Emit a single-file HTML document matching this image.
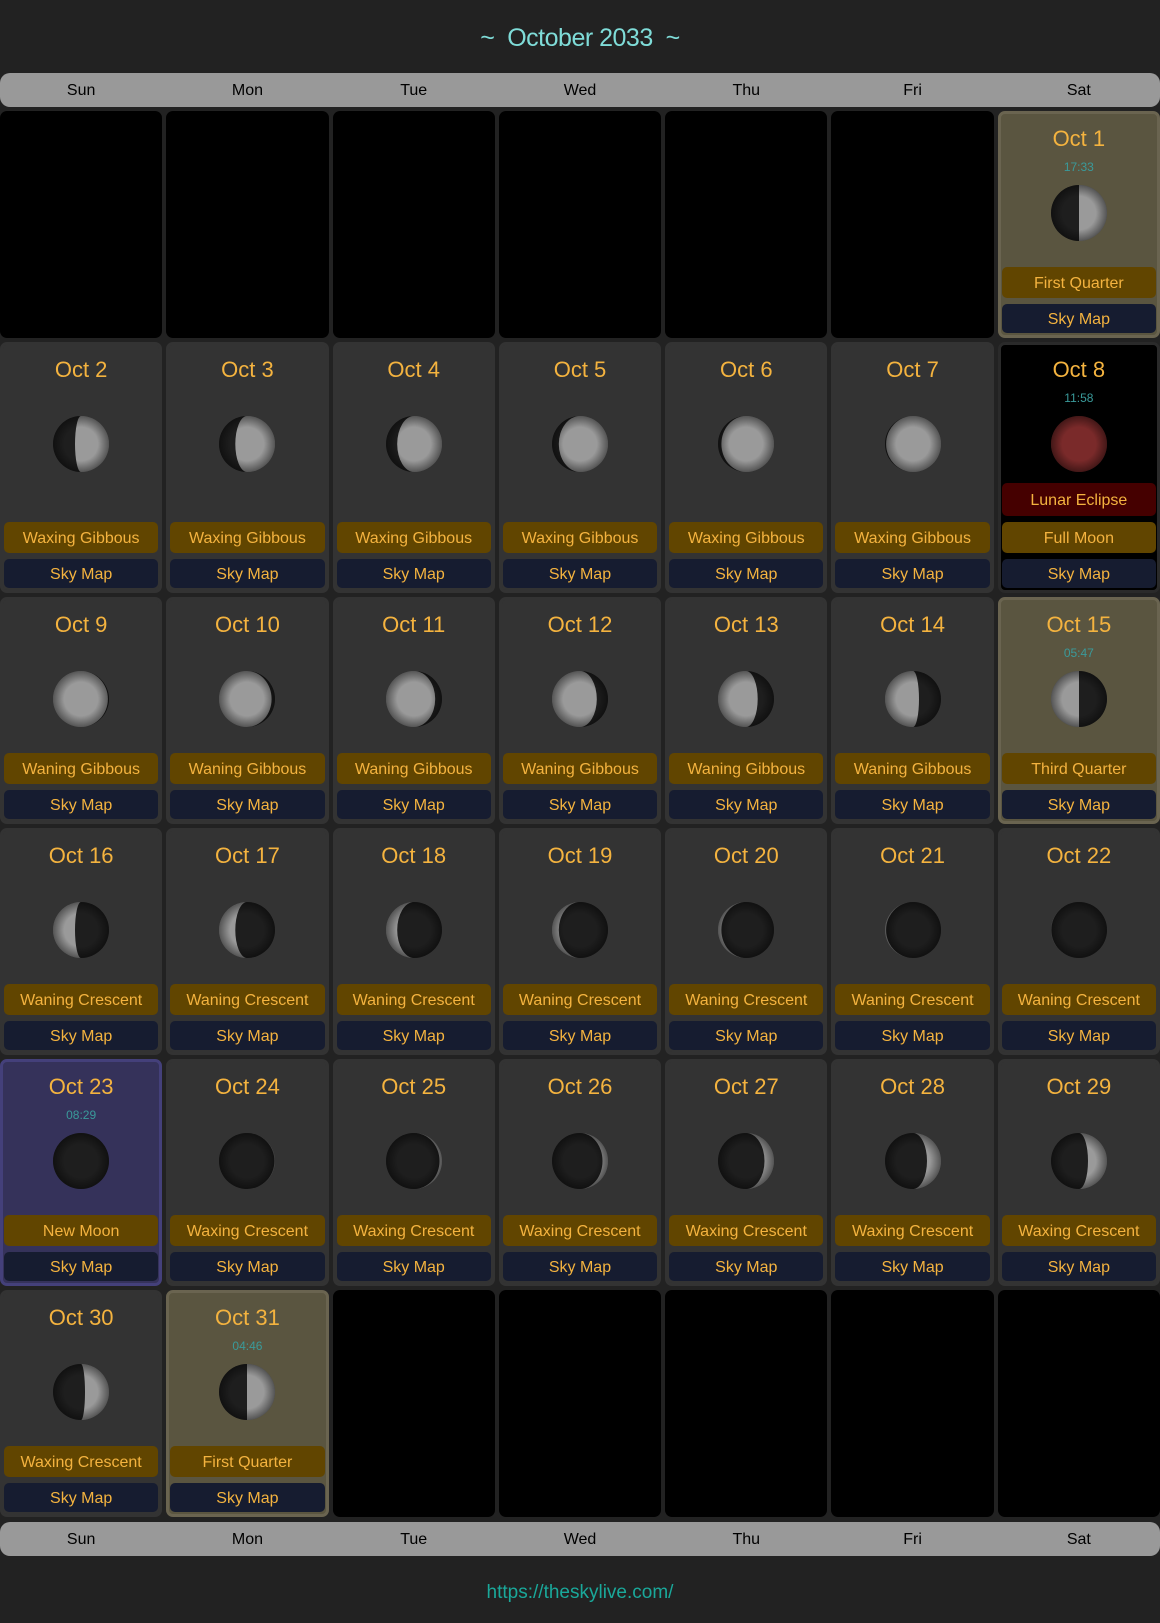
<!DOCTYPE html>
<html><head><meta charset="utf-8"><style>
*{box-sizing:border-box;margin:0;padding:0}
body{width:1160px;height:1623px;background:#222;font-family:"Liberation Sans",sans-serif;position:relative;overflow:hidden}
.title{position:absolute;top:22px;left:0;width:1160px;text-align:center;color:#7fdcd8;font-size:25px;line-height:32px;letter-spacing:-0.5px}
.bar{position:absolute;left:0;width:1160px;height:34px;background:#999;border-radius:10px;display:grid;grid-template-columns:repeat(7,1fr);column-gap:4px}
.bar div{text-align:center;font-size:16px;line-height:36px;color:#000}
.grid{position:absolute;left:0;top:111px;width:1160px;display:grid;grid-template-columns:repeat(7,1fr);grid-template-rows:227px 251px 227px 227px 227px 227px;gap:4px}
.c{background:#333;border-radius:7px;display:flex;flex-direction:column;align-items:center;border:3px solid #333}
.e{background:#000;border-radius:7px}
.q{background:#5a5540;border-color:#6a6450}
.n{background:#35325a;border-color:#44407a}
.f{background:#000;border-color:#2a2a2a}
.d{color:#f4b33f;font-size:22px;line-height:30px;margin-top:10px}
.t{color:#3a9a9a;font-size:12px;line-height:16px;height:16px;margin-top:5px}
.m{margin-top:10px;width:56px;height:56px}
.sp{flex:1}
.l,.s{width:calc(100% - 2px);color:#f4b33f;font-size:16px;text-align:center;border-radius:5px}
.l{background:#614500;height:31px;line-height:33px;margin-bottom:6px}
.x{background:#450000;height:33px;line-height:35px}
.s{background:#161c30;height:29px;line-height:31px;margin-bottom:2px}
.foot{position:absolute;top:1580px;width:1160px;text-align:center;color:#1aa89a;font-size:19px;line-height:26px}
</style></head><body>
<svg width="0" height="0" style="position:absolute"><defs><radialGradient id="g" cx="50%" cy="50%" r="50%"><stop offset="0.6" stop-color="#000" stop-opacity="0"/><stop offset="1" stop-color="#000" stop-opacity="0.45"/></radialGradient></defs></svg>
<div class="title">~&nbsp;&nbsp;October 2033&nbsp;&nbsp;~</div>
<div class="bar" style="top:73px"><div>Sun</div><div>Mon</div><div>Tue</div><div>Wed</div><div>Thu</div><div>Fri</div><div>Sat</div></div>
<div class="grid">
<div class="e"></div><div class="e"></div><div class="e"></div><div class="e"></div><div class="e"></div><div class="e"></div>
<div class="c q"><div class="d">Oct 1</div><div class="t">17:33</div><svg class="m" viewBox="0 0 56 56"><circle cx="28" cy="28" r="28" fill="#1e1e1e"/><path d="M28 0A28 28 0 0 1 28 56Z" fill="#9a9a9a"/><circle cx="28" cy="28" r="28" fill="url(#g)"/></svg><div class="sp"></div><div class="l">First Quarter</div><div class="s">Sky Map</div></div>

<div class="c"><div class="d">Oct 2</div><div class="t"></div><svg class="m" viewBox="0 0 56 56"><circle cx="28" cy="28" r="28" fill="#1e1e1e"/><path d="M28 0A28 28 0 0 1 28 56A6 28 0 0 1 28 0Z" fill="#9a9a9a"/><circle cx="28" cy="28" r="28" fill="url(#g)"/></svg><div class="sp"></div><div class="l">Waxing Gibbous</div><div class="s">Sky Map</div></div>
<div class="c"><div class="d">Oct 3</div><div class="t"></div><svg class="m" viewBox="0 0 56 56"><circle cx="28" cy="28" r="28" fill="#1e1e1e"/><path d="M28 0A28 28 0 0 1 28 56A11.7 28 0 0 1 28 0Z" fill="#9a9a9a"/><circle cx="28" cy="28" r="28" fill="url(#g)"/></svg><div class="sp"></div><div class="l">Waxing Gibbous</div><div class="s">Sky Map</div></div>
<div class="c"><div class="d">Oct 4</div><div class="t"></div><svg class="m" viewBox="0 0 56 56"><circle cx="28" cy="28" r="28" fill="#1e1e1e"/><path d="M28 0A28 28 0 0 1 28 56A16.8 28 0 0 1 28 0Z" fill="#9a9a9a"/><circle cx="28" cy="28" r="28" fill="url(#g)"/></svg><div class="sp"></div><div class="l">Waxing Gibbous</div><div class="s">Sky Map</div></div>
<div class="c"><div class="d">Oct 5</div><div class="t"></div><svg class="m" viewBox="0 0 56 56"><circle cx="28" cy="28" r="28" fill="#1e1e1e"/><path d="M28 0A28 28 0 0 1 28 56A21.2 28 0 0 1 28 0Z" fill="#9a9a9a"/><circle cx="28" cy="28" r="28" fill="url(#g)"/></svg><div class="sp"></div><div class="l">Waxing Gibbous</div><div class="s">Sky Map</div></div>
<div class="c"><div class="d">Oct 6</div><div class="t"></div><svg class="m" viewBox="0 0 56 56"><circle cx="28" cy="28" r="28" fill="#1e1e1e"/><path d="M28 0A28 28 0 0 1 28 56A24.6 28 0 0 1 28 0Z" fill="#9a9a9a"/><circle cx="28" cy="28" r="28" fill="url(#g)"/></svg><div class="sp"></div><div class="l">Waxing Gibbous</div><div class="s">Sky Map</div></div>
<div class="c"><div class="d">Oct 7</div><div class="t"></div><svg class="m" viewBox="0 0 56 56"><circle cx="28" cy="28" r="28" fill="#1e1e1e"/><path d="M28 0A28 28 0 0 1 28 56A26.9 28 0 0 1 28 0Z" fill="#9a9a9a"/><circle cx="28" cy="28" r="28" fill="url(#g)"/></svg><div class="sp"></div><div class="l">Waxing Gibbous</div><div class="s">Sky Map</div></div>
<div class="c f"><div class="d">Oct 8</div><div class="t">11:58</div><svg class="m" viewBox="0 0 56 56"><circle cx="28" cy="28" r="28" fill="#7a2a2a"/><circle cx="28" cy="28" r="28" fill="url(#g)"/></svg><div class="sp"></div><div class="l x">Lunar Eclipse</div><div class="l">Full Moon</div><div class="s">Sky Map</div></div>

<div class="c"><div class="d">Oct 9</div><div class="t"></div><svg class="m" viewBox="0 0 56 56"><circle cx="28" cy="28" r="28" fill="#1e1e1e"/><path d="M28 0A28 28 0 0 0 28 56A26.9 28 0 0 0 28 0Z" fill="#9a9a9a"/><circle cx="28" cy="28" r="28" fill="url(#g)"/></svg><div class="sp"></div><div class="l">Waning Gibbous</div><div class="s">Sky Map</div></div>
<div class="c"><div class="d">Oct 10</div><div class="t"></div><svg class="m" viewBox="0 0 56 56"><circle cx="28" cy="28" r="28" fill="#1e1e1e"/><path d="M28 0A28 28 0 0 0 28 56A24.6 28 0 0 0 28 0Z" fill="#9a9a9a"/><circle cx="28" cy="28" r="28" fill="url(#g)"/></svg><div class="sp"></div><div class="l">Waning Gibbous</div><div class="s">Sky Map</div></div>
<div class="c"><div class="d">Oct 11</div><div class="t"></div><svg class="m" viewBox="0 0 56 56"><circle cx="28" cy="28" r="28" fill="#1e1e1e"/><path d="M28 0A28 28 0 0 0 28 56A21.2 28 0 0 0 28 0Z" fill="#9a9a9a"/><circle cx="28" cy="28" r="28" fill="url(#g)"/></svg><div class="sp"></div><div class="l">Waning Gibbous</div><div class="s">Sky Map</div></div>
<div class="c"><div class="d">Oct 12</div><div class="t"></div><svg class="m" viewBox="0 0 56 56"><circle cx="28" cy="28" r="28" fill="#1e1e1e"/><path d="M28 0A28 28 0 0 0 28 56A16.8 28 0 0 0 28 0Z" fill="#9a9a9a"/><circle cx="28" cy="28" r="28" fill="url(#g)"/></svg><div class="sp"></div><div class="l">Waning Gibbous</div><div class="s">Sky Map</div></div>
<div class="c"><div class="d">Oct 13</div><div class="t"></div><svg class="m" viewBox="0 0 56 56"><circle cx="28" cy="28" r="28" fill="#1e1e1e"/><path d="M28 0A28 28 0 0 0 28 56A11.7 28 0 0 0 28 0Z" fill="#9a9a9a"/><circle cx="28" cy="28" r="28" fill="url(#g)"/></svg><div class="sp"></div><div class="l">Waning Gibbous</div><div class="s">Sky Map</div></div>
<div class="c"><div class="d">Oct 14</div><div class="t"></div><svg class="m" viewBox="0 0 56 56"><circle cx="28" cy="28" r="28" fill="#1e1e1e"/><path d="M28 0A28 28 0 0 0 28 56A6 28 0 0 0 28 0Z" fill="#9a9a9a"/><circle cx="28" cy="28" r="28" fill="url(#g)"/></svg><div class="sp"></div><div class="l">Waning Gibbous</div><div class="s">Sky Map</div></div>
<div class="c q"><div class="d">Oct 15</div><div class="t">05:47</div><svg class="m" viewBox="0 0 56 56"><circle cx="28" cy="28" r="28" fill="#1e1e1e"/><path d="M28 0A28 28 0 0 0 28 56Z" fill="#9a9a9a"/><circle cx="28" cy="28" r="28" fill="url(#g)"/></svg><div class="sp"></div><div class="l">Third Quarter</div><div class="s">Sky Map</div></div>

<div class="c"><div class="d">Oct 16</div><div class="t"></div><svg class="m" viewBox="0 0 56 56"><circle cx="28" cy="28" r="28" fill="#1e1e1e"/><path d="M28 0A28 28 0 0 0 28 56A6 28 0 0 1 28 0Z" fill="#9a9a9a"/><circle cx="28" cy="28" r="28" fill="url(#g)"/></svg><div class="sp"></div><div class="l">Waning Crescent</div><div class="s">Sky Map</div></div>
<div class="c"><div class="d">Oct 17</div><div class="t"></div><svg class="m" viewBox="0 0 56 56"><circle cx="28" cy="28" r="28" fill="#1e1e1e"/><path d="M28 0A28 28 0 0 0 28 56A11.7 28 0 0 1 28 0Z" fill="#9a9a9a"/><circle cx="28" cy="28" r="28" fill="url(#g)"/></svg><div class="sp"></div><div class="l">Waning Crescent</div><div class="s">Sky Map</div></div>
<div class="c"><div class="d">Oct 18</div><div class="t"></div><svg class="m" viewBox="0 0 56 56"><circle cx="28" cy="28" r="28" fill="#1e1e1e"/><path d="M28 0A28 28 0 0 0 28 56A16.8 28 0 0 1 28 0Z" fill="#9a9a9a"/><circle cx="28" cy="28" r="28" fill="url(#g)"/></svg><div class="sp"></div><div class="l">Waning Crescent</div><div class="s">Sky Map</div></div>
<div class="c"><div class="d">Oct 19</div><div class="t"></div><svg class="m" viewBox="0 0 56 56"><circle cx="28" cy="28" r="28" fill="#1e1e1e"/><path d="M28 0A28 28 0 0 0 28 56A21.2 28 0 0 1 28 0Z" fill="#9a9a9a"/><circle cx="28" cy="28" r="28" fill="url(#g)"/></svg><div class="sp"></div><div class="l">Waning Crescent</div><div class="s">Sky Map</div></div>
<div class="c"><div class="d">Oct 20</div><div class="t"></div><svg class="m" viewBox="0 0 56 56"><circle cx="28" cy="28" r="28" fill="#1e1e1e"/><path d="M28 0A28 28 0 0 0 28 56A24.6 28 0 0 1 28 0Z" fill="#9a9a9a"/><circle cx="28" cy="28" r="28" fill="url(#g)"/></svg><div class="sp"></div><div class="l">Waning Crescent</div><div class="s">Sky Map</div></div>
<div class="c"><div class="d">Oct 21</div><div class="t"></div><svg class="m" viewBox="0 0 56 56"><circle cx="28" cy="28" r="28" fill="#1e1e1e"/><path d="M28 0A28 28 0 0 0 28 56A26.9 28 0 0 1 28 0Z" fill="#9a9a9a"/><circle cx="28" cy="28" r="28" fill="url(#g)"/></svg><div class="sp"></div><div class="l">Waning Crescent</div><div class="s">Sky Map</div></div>
<div class="c"><div class="d">Oct 22</div><div class="t"></div><svg class="m" viewBox="0 0 56 56"><circle cx="28" cy="28" r="28" fill="#1e1e1e"/><path d="M28 0A28 28 0 0 0 28 56A27.6 28 0 0 1 28 0Z" fill="#777"/><circle cx="28" cy="28" r="28" fill="url(#g)"/></svg><div class="sp"></div><div class="l">Waning Crescent</div><div class="s">Sky Map</div></div>

<div class="c n"><div class="d">Oct 23</div><div class="t">08:29</div><svg class="m" viewBox="0 0 56 56"><circle cx="28" cy="28" r="28" fill="#1e1e1e"/><circle cx="28" cy="28" r="28" fill="url(#g)"/></svg><div class="sp"></div><div class="l">New Moon</div><div class="s">Sky Map</div></div>
<div class="c"><div class="d">Oct 24</div><div class="t"></div><svg class="m" viewBox="0 0 56 56"><circle cx="28" cy="28" r="28" fill="#1e1e1e"/><path d="M28 0A28 28 0 0 1 28 56A27.4 28 0 0 0 28 0Z" fill="#777"/><circle cx="28" cy="28" r="28" fill="url(#g)"/></svg><div class="sp"></div><div class="l">Waxing Crescent</div><div class="s">Sky Map</div></div>
<div class="c"><div class="d">Oct 25</div><div class="t"></div><svg class="m" viewBox="0 0 56 56"><circle cx="28" cy="28" r="28" fill="#1e1e1e"/><path d="M28 0A28 28 0 0 1 28 56A25.5 28 0 0 0 28 0Z" fill="#9a9a9a"/><circle cx="28" cy="28" r="28" fill="url(#g)"/></svg><div class="sp"></div><div class="l">Waxing Crescent</div><div class="s">Sky Map</div></div>
<div class="c"><div class="d">Oct 26</div><div class="t"></div><svg class="m" viewBox="0 0 56 56"><circle cx="28" cy="28" r="28" fill="#1e1e1e"/><path d="M28 0A28 28 0 0 1 28 56A22.5 28 0 0 0 28 0Z" fill="#9a9a9a"/><circle cx="28" cy="28" r="28" fill="url(#g)"/></svg><div class="sp"></div><div class="l">Waxing Crescent</div><div class="s">Sky Map</div></div>
<div class="c"><div class="d">Oct 27</div><div class="t"></div><svg class="m" viewBox="0 0 56 56"><circle cx="28" cy="28" r="28" fill="#1e1e1e"/><path d="M28 0A28 28 0 0 1 28 56A18.5 28 0 0 0 28 0Z" fill="#9a9a9a"/><circle cx="28" cy="28" r="28" fill="url(#g)"/></svg><div class="sp"></div><div class="l">Waxing Crescent</div><div class="s">Sky Map</div></div>
<div class="c"><div class="d">Oct 28</div><div class="t"></div><svg class="m" viewBox="0 0 56 56"><circle cx="28" cy="28" r="28" fill="#1e1e1e"/><path d="M28 0A28 28 0 0 1 28 56A14 28 0 0 0 28 0Z" fill="#9a9a9a"/><circle cx="28" cy="28" r="28" fill="url(#g)"/></svg><div class="sp"></div><div class="l">Waxing Crescent</div><div class="s">Sky Map</div></div>
<div class="c"><div class="d">Oct 29</div><div class="t"></div><svg class="m" viewBox="0 0 56 56"><circle cx="28" cy="28" r="28" fill="#1e1e1e"/><path d="M28 0A28 28 0 0 1 28 56A9 28 0 0 0 28 0Z" fill="#9a9a9a"/><circle cx="28" cy="28" r="28" fill="url(#g)"/></svg><div class="sp"></div><div class="l">Waxing Crescent</div><div class="s">Sky Map</div></div>

<div class="c"><div class="d">Oct 30</div><div class="t"></div><svg class="m" viewBox="0 0 56 56"><circle cx="28" cy="28" r="28" fill="#1e1e1e"/><path d="M28 0A28 28 0 0 1 28 56A4 28 0 0 0 28 0Z" fill="#9a9a9a"/><circle cx="28" cy="28" r="28" fill="url(#g)"/></svg><div class="sp"></div><div class="l">Waxing Crescent</div><div class="s">Sky Map</div></div>
<div class="c q"><div class="d">Oct 31</div><div class="t">04:46</div><svg class="m" viewBox="0 0 56 56"><circle cx="28" cy="28" r="28" fill="#1e1e1e"/><path d="M28 0A28 28 0 0 1 28 56Z" fill="#9a9a9a"/><circle cx="28" cy="28" r="28" fill="url(#g)"/></svg><div class="sp"></div><div class="l">First Quarter</div><div class="s">Sky Map</div></div>
<div class="e"></div><div class="e"></div><div class="e"></div><div class="e"></div><div class="e"></div>
</div>
<div class="bar" style="top:1522px"><div>Sun</div><div>Mon</div><div>Tue</div><div>Wed</div><div>Thu</div><div>Fri</div><div>Sat</div></div>
<div class="foot">https://theskylive.com/</div>
</body></html>
